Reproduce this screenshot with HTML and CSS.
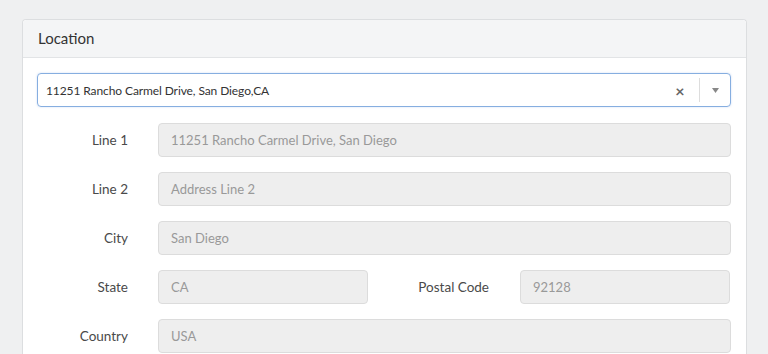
FILE: index.html
```html
<!DOCTYPE html>
<html>
<head>
<meta charset="utf-8">
<link rel="stylesheet" href="styles.css">
</head>
<body>
<div class="page">
  <div class="panel">
    <div class="panel-heading">Location</div>
    <div class="panel-body">
      <div class="select">
        <span class="select-value">11251 Rancho Carmel Drive, San Diego,CA</span>
        <span class="select-clear">&#215;</span>
        <span class="select-arrow"><svg width="7" height="5" viewBox="0 0 7 5"><path d="M0 0 L7 0 L3.5 5 Z" fill="#888"/></svg></span>
      </div>
      <div class="row">
        <label class="lbl">Line 1</label>
        <div class="field full">11251 Rancho Carmel Drive, San Diego</div>
      </div>
      <div class="row">
        <label class="lbl">Line 2</label>
        <div class="field full">Address Line 2</div>
      </div>
      <div class="row">
        <label class="lbl">City</label>
        <div class="field full">San Diego</div>
      </div>
      <div class="row">
        <label class="lbl">State</label>
        <div class="field half">CA</div>
        <label class="lbl lbl2">Postal Code</label>
        <div class="field half">92128</div>
      </div>
      <div class="row">
        <label class="lbl">Country</label>
        <div class="field full">USA</div>
      </div>
    </div>
  </div>
</div>
</body>
</html>
```
FILE: styles.css
```css
html, body {
  margin: 0;
  padding: 0;
  background: #eff0f1;
  font-family: "Lato", "Liberation Sans", sans-serif;
  color: #333;
}
.page {
  padding: 19px 21px 0 22px;
  height: 335px;
  overflow: hidden;
}
.panel {
  width: 723px;
  background: #fff;
  border: 1px solid #dcdee0;
  border-radius: 4px;
  border-bottom: none;
  height: 400px;
}
.panel-heading {
  height: 38px;
  box-sizing: border-box;
  padding: 8px 15px 0 15px;
  background: #f4f5f6;
  border-bottom: 1px solid #e2e4e6;
  border-radius: 4px 4px 0 0;
  font-size: 15px;
  color: #333;
  line-height: 20px;
}
.panel-body {
  padding: 15px 15px 0 14px;
}
.select {
  display: flex;
  align-items: center;
  height: 34px;
  box-sizing: border-box;
  border: 1px solid #86aee0;
  border-radius: 4px;
  box-shadow: 0 0 2px rgba(102, 150, 220, 0.35);
  margin-bottom: 16px;
}
.select-value {
  flex: 1;
  padding-left: 8px;
  font-size: 12px;
  letter-spacing: -0.1px;
  color: #333;
}
.select-clear {
  width: 20px;
  text-align: center;
  font-size: 16px;
  font-weight: bold;
  color: #666;
  margin-right: 9px;
}
.select-arrow {
  width: 30px;
  height: 24px;
  border-left: 1px solid #ddd;
  display: flex;
  align-items: center;
  justify-content: center;
}
.row {
  display: flex;
  align-items: center;
  margin-bottom: 15px;
}
.lbl {
  width: 91px;
  text-align: right;
  font-size: 13.5px;
  color: #4a4a4a;
  margin-right: 30px;
  flex: none;
}
.lbl2 {
  width: 121px;
  margin-right: 31px;
}
.field {
  height: 34px;
  box-sizing: border-box;
  background: #eeeeee;
  border: 1px solid #dcdcdc;
  border-radius: 4px;
  padding-left: 12px;
  font-size: 13px;
  color: #999;
  display: flex;
  align-items: center;
}
.full {
  flex: 1;
}
.half {
  width: 210px;
  flex: none;
}
```
